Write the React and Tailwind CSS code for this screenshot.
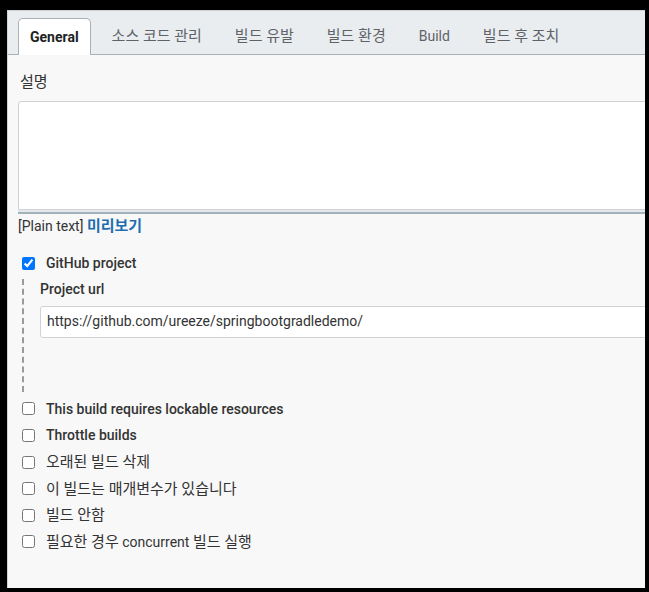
import React from "react";

const font = { fontFamily: 'Roboto, "Noto Sans CJK KR", sans-serif' };

function K({ text }) {
  const parts = text.split(/([가-힣]+(?:\s+[가-힣]+)*)/);
  return (
    <>
      {parts.map((p, i) =>
        /[가-힣]/.test(p) ? (
          <span key={i} className="text-[15px]">{p}</span>
        ) : (
          <span key={i}>{p}</span>
        )
      )}
    </>
  );
}

function Check({ checked, label, bold }) {
  return (
    <div className="flex items-center h-[26.6px]">
      <input
        type="checkbox"
        defaultChecked={checked}
        className="m-0 ml-[4px] w-[13px] h-[13px] shrink-0"
      />
      <span className={`ml-[11px] text-[14px] leading-[20px] text-[#333] whitespace-nowrap ${bold ? "font-medium" : ""}`}>
        <K text={label} />
      </span>
    </div>
  );
}

export default function App() {
  const tabs = ["소스 코드 관리", "빌드 유발", "빌드 환경", "Build", "빌드 후 조치"];
  return (
    <div className="w-[649px] h-[592px] bg-black pt-[10px] pl-[7px] pr-[4px] pb-[4px]" style={font}>
      <div className="w-full h-full bg-[#f8f8f8] border-l border-t border-[#cfd3d6] overflow-hidden">
        {/* tab bar */}
        <div className="h-[44px] bg-[#e9edf0] border-b border-[#a9b1b7] pt-[7px] pl-[10px] flex items-end gap-[9px]">
          <div className="h-[37px] -mb-px bg-white border border-b-0 border-[#a9b1b7] rounded-t-[5px] px-[11px] flex items-center text-[14px] font-bold text-[#222]">
            General
          </div>
          {tabs.map((t) => (
            <div key={t} className="h-[37px] -mb-px px-3 flex items-center text-[14px] text-[#5f6368] whitespace-nowrap">
              <K text={t} />
            </div>
          ))}
        </div>

        {/* body */}
        <div className="pl-[10px] pt-[17px]">
          <div className="text-[15px] leading-[20px] text-[#333] pl-[2px]">설명</div>
          <div className="mt-[9px] w-[700px]">
            <div className="h-[109px] bg-white border border-[#cfd3d6] rounded-t-[3px]" />
            <div className="h-[4px] bg-[#e4e8eb] border-b-2 border-[#a3b1bb]" />
          </div>
          <div className="mt-[2px] text-[14px] leading-[20px] text-[#333] whitespace-nowrap">
            [Plain text] <span className="text-[15px] font-bold text-[#1e6db0]">미리보기</span>
          </div>

          <div className="mt-[14px]">
            <Check checked label="GitHub project" bold />
          </div>
          <div className="ml-[4px] mt-[2px] border-l-2 border-dashed border-[#9a9a9a] pl-[16px] h-[113px]">
            <div className="text-[14px] leading-[20px] font-medium text-[#333]">Project url</div>
            <div className="mt-[7px] w-[700px] h-[32px] bg-white border border-[#cfd3d6] rounded-[3px] flex items-center pl-[6px] text-[14px] text-[#333] whitespace-nowrap">
              https://github.com/ureeze/springbootgradledemo/
            </div>
          </div>
          <div className="mt-[4px]">
            <Check label="This build requires lockable resources" bold />
            <Check label="Throttle builds" bold />
            <Check label="오래된 빌드 삭제" />
            <Check label="이 빌드는 매개변수가 있습니다" />
            <Check label="빌드 안함" />
            <Check label="필요한 경우 concurrent 빌드 실행" />
          </div>
        </div>
      </div>
    </div>
  );
}
